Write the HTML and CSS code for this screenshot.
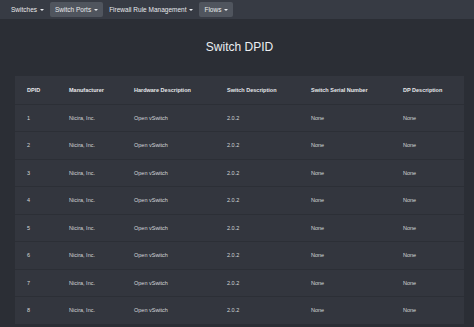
FILE: index.html
```html
<!DOCTYPE html>
<html>
<head>
<meta charset="utf-8">
<link rel="stylesheet" href="styles.css">
</head>
<body>
<nav class="navbar">
  <span class="nav-item">Switches <span class="caret"></span></span>
  <span class="nav-item active">Switch Ports <span class="caret"></span></span>
  <span class="nav-item">Firewall Rule Management <span class="caret"></span></span>
  <span class="nav-item active">Flows <span class="caret"></span></span>
</nav>
<main class="content">
  <h1 class="title">Switch DPID</h1>
  <div class="table">
    <div class="row head">
      <span>DPID</span><span>Manufacturer</span><span>Hardware Description</span><span>Switch Description</span><span>Switch Serial Number</span><span>DP Description</span>
    </div>
    <div class="row"><span>1</span><span>Nicira, Inc.</span><span>Open vSwitch</span><span>2.0.2</span><span>None</span><span>None</span></div>
    <div class="row"><span>2</span><span>Nicira, Inc.</span><span>Open vSwitch</span><span>2.0.2</span><span>None</span><span>None</span></div>
    <div class="row"><span>3</span><span>Nicira, Inc.</span><span>Open vSwitch</span><span>2.0.2</span><span>None</span><span>None</span></div>
    <div class="row"><span>4</span><span>Nicira, Inc.</span><span>Open vSwitch</span><span>2.0.2</span><span>None</span><span>None</span></div>
    <div class="row"><span>5</span><span>Nicira, Inc.</span><span>Open vSwitch</span><span>2.0.2</span><span>None</span><span>None</span></div>
    <div class="row"><span>6</span><span>Nicira, Inc.</span><span>Open vSwitch</span><span>2.0.2</span><span>None</span><span>None</span></div>
    <div class="row"><span>7</span><span>Nicira, Inc.</span><span>Open vSwitch</span><span>2.0.2</span><span>None</span><span>None</span></div>
    <div class="row"><span>8</span><span>Nicira, Inc.</span><span>Open vSwitch</span><span>2.0.2</span><span>None</span><span>None</span></div>
  </div>
</main>
</body>
</html>
```
FILE: styles.css
```css
html, body {
  margin: 0;
  padding: 0;
  background: #2b2e35;
  font-family: "Liberation Sans", Arial, sans-serif;
  color: #e4e6ea;
  overflow: hidden;
}
.navbar {
  height: 19px;
  background: #373b44;
  display: flex;
  align-items: center;
  padding-left: 6px;
  gap: 1px;
}
.nav-item {
  font-size: 6.5px;
  color: #e8e9ec;
  padding: 4px 5px;
  border-radius: 2px;
  display: flex;
  align-items: center;
  gap: 3px;
  white-space: nowrap;
}
.nav-item.active {
  background: #50555e;
}
.caret {
  width: 0;
  height: 0;
  border-left: 2px solid transparent;
  border-right: 2px solid transparent;
  border-top: 2px solid #e8e9ec;
}
.content {
  padding: 0 10px 0 15px;
}
.title {
  margin: 0;
  height: 56px;
  display: flex;
  align-items: center;
  justify-content: center;
  font-weight: normal;
  font-size: 12px;
  color: #eceef1;
  padding-bottom: 1px;
}
.table {
  background: #33363e;
  width: 449px;
}
.row {
  display: grid;
  grid-template-columns: 42px 65px 93px 84px 92px 61px;
  height: 27.5px;
  align-items: center;
  padding-left: 12px;
  box-sizing: border-box;
  border-top: 1px solid #2c2f36;
  font-size: 5.5px;
  color: #d4d6da;
  white-space: nowrap;
}
.row.head {
  border-top: none;
  font-weight: bold;
  color: #e6e8eb;
}
```
